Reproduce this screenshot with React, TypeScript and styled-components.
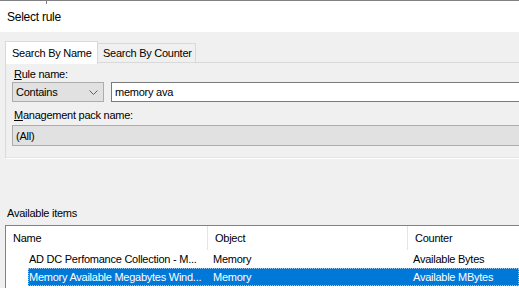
import React from "react";
import styled, { createGlobalStyle } from "styled-components";

const GlobalStyle = createGlobalStyle`
  html, body {
    margin: 0;
    padding: 0;
    background: #f0f0f0;
    overflow: hidden;
  }
  body {
    font-family: "Liberation Sans", Arial, sans-serif;
    font-size: 11px;
    letter-spacing: -0.25px;
    color: #000;
  }
`;

const Window = styled.div`
  width: 519px;
  height: 288px;
  overflow: hidden;
  background: #f0f0f0;
`;

const TitleBar = styled.div`
  height: 31px;
  border-top: 1px solid #808080;
  background: #fff;
  display: flex;
  align-items: center;
  padding-left: 7px;
  font-size: 12px;
  position: relative;
`;

const TitleTick = styled.span`
  position: absolute;
  left: 46px;
  top: -1px;
  width: 1px;
  height: 4px;
  background: #808080;
`;

const Body = styled.div`
  padding-top: 8px;
`;

const TabStrip = styled.div`
  display: flex;
  align-items: flex-end;
  padding-left: 5px;
  height: 23px;
  position: relative;
  z-index: 1;
`;

const Tab = styled.div<{ $active?: boolean }>`
  box-sizing: border-box;
  height: ${({ $active }) => ($active ? "23px" : "20px")};
  width: ${({ $active }) => ($active ? "93px" : "98px")};
  padding-left: ${({ $active }) => ($active ? "6px" : "5px")};
  display: flex;
  align-items: center;
  border: 1px solid #d9d9d9;
  border-bottom: ${({ $active }) => ($active ? "none" : "1px solid #d9d9d9")};
  border-left: ${({ $active }) => ($active ? "1px solid #d9d9d9" : "none")};
  background: ${({ $active }) => ($active ? "#fff" : "#f0f0f0")};
  white-space: nowrap;
  overflow: hidden;
  margin-bottom: ${({ $active }) => ($active ? "-1px" : "0")};
`;

const TabPanel = styled.div`
  margin-left: 5px;
  margin-top: -1px;
  border: 1px solid #d9d9d9;
  border-right: none;
  border-bottom: 1px solid #fff;
  box-shadow: inset 0 -1px 0 #e3e3e3;
  padding: 4px 0 12px 6px;
  display: flex;
  flex-direction: column;
`;

const FieldLabel = styled.div`
  height: 14px;
  line-height: 14px;
  padding-left: 2px;
`;

const Key = styled.span`
  text-decoration: underline;
`;

const FieldRow = styled.div`
  display: flex;
  gap: 7px;
  margin-top: 1px;
  height: 20px;
`;

const Combo = styled.div`
  box-sizing: border-box;
  width: 92px;
  height: 20px;
  border: 1px solid #adadad;
  background: #e1e1e1;
  display: flex;
  align-items: center;
  justify-content: space-between;
  padding: 0 5px 0 3px;
`;

const TextBox = styled.div`
  box-sizing: border-box;
  flex: 1;
  height: 20px;
  border: 1px solid #7a7a7a;
  border-right: none;
  background: #fff;
  display: flex;
  align-items: center;
  padding-left: 3px;
`;

const SecondLabel = styled(FieldLabel)`
  margin-top: 6px;
`;

const PackBox = styled.div`
  box-sizing: border-box;
  height: 21px;
  margin-top: 3px;
  border: 1px solid #adadad;
  border-right: none;
  background: #e1e1e1;
  display: flex;
  align-items: center;
  padding-left: 3px;
`;

const SectionLabel = styled.div`
  margin-top: 47px;
  padding-left: 7px;
  height: 14px;
  line-height: 14px;
`;

const List = styled.div`
  margin-top: 5px;
  margin-left: 5px;
  border-top: 1px solid #828282;
  border-left: 1px solid #828282;
  background: #fff;
  height: 80px;
`;

const HeaderRow = styled.div`
  display: grid;
  grid-template-columns: 201px 200px 1fr;
  height: 24px;
`;

const HeaderCell = styled.div<{ $sep?: boolean }>`
  display: flex;
  align-items: center;
  padding-left: 7px;
  border-left: ${({ $sep }) => ($sep ? "1px solid #e5e5e5" : "none")};
`;

const ItemRow = styled.div<{ $selected?: boolean }>`
  display: grid;
  grid-template-columns: 178px 200px 1fr;
  height: 18px;
  margin-left: 22px;
  box-sizing: border-box;
  background: ${({ $selected }) => ($selected ? "#0078d7" : "transparent")};
  color: ${({ $selected }) => ($selected ? "#fff" : "#000")};
  outline: ${({ $selected }) => ($selected ? "1px dotted #9cc8ee" : "none")};
  outline-offset: -1px;
`;

const Cell = styled.div<{ $first?: boolean }>`
  display: flex;
  align-items: center;
  padding-left: ${({ $first }) => ($first ? "1px" : "7px")};
  white-space: nowrap;
  overflow: hidden;
`;

const Chevron = () => (
  <svg width="9" height="5" viewBox="0 0 9 5">
    <path d="M0.5 0.5 L4.5 4.5 L8.5 0.5" fill="none" stroke="#606060" strokeWidth="1" />
  </svg>
);

const rows = [
  { name: "AD DC Perfomance Collection - M...", object: "Memory", counter: "Available Bytes" },
  { name: "Memory Available Megabytes Wind...", object: "Memory", counter: "Available MBytes", selected: true },
];

export default function App() {
  return (
    <Window>
      <GlobalStyle />
      <TitleBar>
        <TitleTick />
        Select rule
      </TitleBar>
      <Body>
        <TabStrip>
          <Tab $active>Search By Name</Tab>
          <Tab>Search By Counter</Tab>
        </TabStrip>
        <TabPanel>
          <FieldLabel>
            <Key>R</Key>ule name:
          </FieldLabel>
          <FieldRow>
            <Combo>
              Contains
              <Chevron />
            </Combo>
            <TextBox>memory ava</TextBox>
          </FieldRow>
          <SecondLabel>
            <Key>M</Key>anagement pack name:
          </SecondLabel>
          <PackBox>(All)</PackBox>
        </TabPanel>
        <SectionLabel>Available items</SectionLabel>
        <List>
          <HeaderRow>
            <HeaderCell>Name</HeaderCell>
            <HeaderCell $sep>Object</HeaderCell>
            <HeaderCell $sep>Counter</HeaderCell>
          </HeaderRow>
          {rows.map((r) => (
            <ItemRow key={r.name} $selected={r.selected}>
              <Cell $first>{r.name}</Cell>
              <Cell>{r.object}</Cell>
              <Cell>{r.counter}</Cell>
            </ItemRow>
          ))}
        </List>
      </Body>
    </Window>
  );
}
